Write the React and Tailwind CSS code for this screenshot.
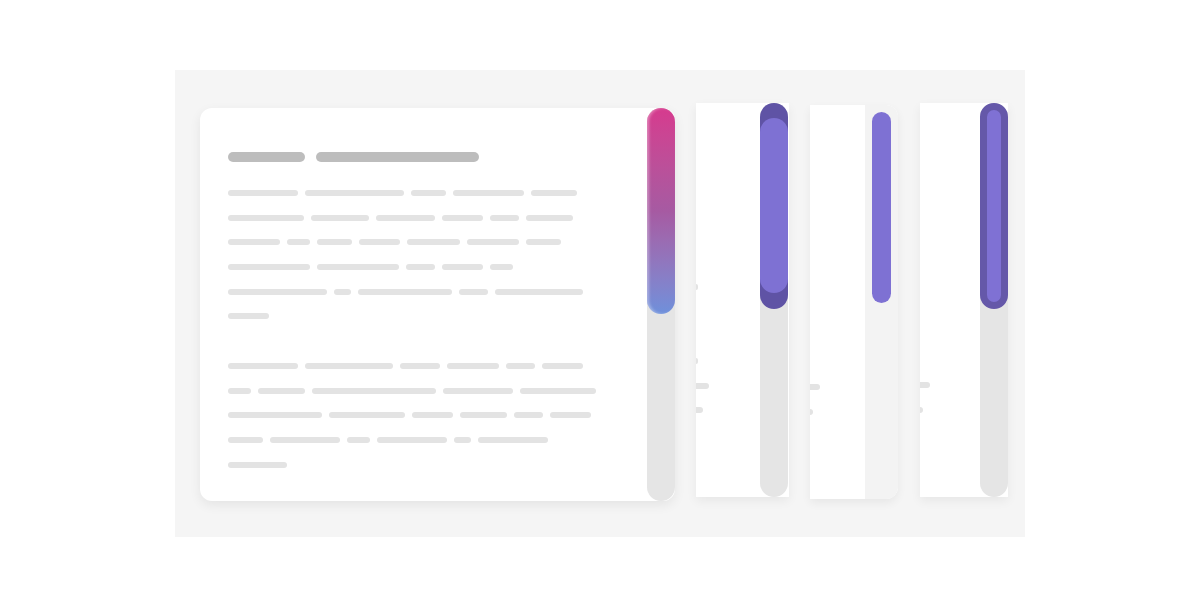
import React from 'react';

// segment widths (px) for each skeleton line; 0-length row = blank line
const rows = [
  [70, 99, 35, 71, 46],
  [76, 58, 59, 41, 29, 47],
  [52, 23, 35, 41, 53, 52, 35],
  [82, 82, 29, 41, 23],
  [99, 17, 94, 29, 88],
  [41],
  [],
  [70, 88, 40, 52, 29, 41],
  [23, 47, 124, 70, 76],
  [94, 76, 41, 47, 29, 41],
  [35, 70, 23, 70, 17, 70],
  [59],
];

function Line({ widths }) {
  return (
    <div className="flex h-[6px] gap-[7px]">
      {widths.map((w, i) => (
        <div key={i} className="h-[6px] rounded-full bg-[#e3e3e3]" style={{ width: w }} />
      ))}
    </div>
  );
}

// cropped bits of text that peek in on the left edge of a slice
function Fragments({ top, items }) {
  return (
    <div className="flex flex-col gap-[18.7px]" style={{ paddingTop: top }}>
      {items.map((w, i) => (
        <div key={i} className="h-[6px]">
          {w > 0 && <div className="h-[6px] rounded-r-full bg-[#e3e3e3]" style={{ width: w }} />}
        </div>
      ))}
    </div>
  );
}

export default function App() {
  return (
    <div className="w-full h-[600px] bg-white flex justify-center pt-[70px]">
      <div className="w-[850px] h-[467px] bg-[#f5f5f5] flex items-start pl-[25px]">
        {/* Main card with gradient thumb */}
        <div className="mt-[38px] w-[475px] h-[393px] rounded-xl bg-white shadow-[0_4px_12px_rgba(0,0,0,0.07)] flex">
          <div className="flex-1 pl-[28px] pt-[44px]">
            <div className="flex gap-[11px]">
              <div className="w-[77px] h-[10px] rounded-full bg-[#bdbdbd]" />
              <div className="w-[163px] h-[10px] rounded-full bg-[#bdbdbd]" />
            </div>
            <div className="mt-[28px] flex flex-col gap-[18.7px]">
              {rows.map((r, i) => (
                <Line key={i} widths={r} />
              ))}
            </div>
          </div>
          <div className="w-[28px] h-full rounded-full bg-[#e5e5e5]">
            <div className="h-[206px] rounded-full bg-gradient-to-b from-[#d63a8e] via-[#a65aa2] to-[#6e90db] shadow-[inset_2px_0_3px_rgba(255,255,255,0.35)]" />
          </div>
        </div>

        {/* Slice 2: two-tone thumb */}
        <div className="ml-[21px] mt-[33px] w-[93px] h-[394px] bg-white flex pr-[1px] shadow-[0_4px_10px_rgba(0,0,0,0.06)]">
          <div className="flex-1">
            <Fragments top={181} items={[2, 0, 0, 2, 13, 7]} />
          </div>
          <div className="w-[28px] h-full rounded-full bg-[#e5e5e5]">
            <div className="h-[206px] rounded-full bg-[#5f53a5] pt-[15px]">
              <div className="h-[175px] rounded-full bg-[#7e71d3]" />
            </div>
          </div>
        </div>

        {/* Slice 3: thin thumb on pale track */}
        <div className="ml-[21px] mt-[35px] w-[88px] h-[394px] bg-white flex rounded-r-xl overflow-hidden shadow-[0_4px_10px_rgba(0,0,0,0.06)]">
          <div className="flex-1">
            <Fragments top={279} items={[10, 3]} />
          </div>
          <div className="w-[33px] h-full bg-[#f3f3f3] pl-[7px] pt-[7px]">
            <div className="w-[19px] h-[191px] rounded-full bg-[#7e71d3]" />
          </div>
        </div>

        {/* Slice 4: bordered thumb */}
        <div className="ml-[22px] mt-[33px] w-[88px] h-[394px] bg-white flex shadow-[0_4px_10px_rgba(0,0,0,0.06)]">
          <div className="flex-1">
            <Fragments top={279} items={[10, 3]} />
          </div>
          <div className="w-[28px] h-full rounded-full bg-[#e5e5e5]">
            <div className="h-[206px] rounded-full bg-[#7f71d4] border-[7px] border-[#6558a9]" />
          </div>
        </div>
      </div>
    </div>
  );
}
